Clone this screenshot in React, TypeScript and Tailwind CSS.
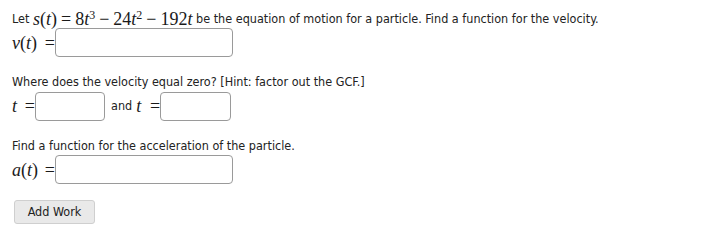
import React from "react";

const mathCls = "font-['Liberation_Serif',serif] text-[18px] leading-none text-[#1a1a1a]";
const sansCls = "font-['DejaVu_Sans_Condensed','DejaVu_Sans',sans-serif]";

function Box({ w }: { w: string }) {
  return <div className={`${w} h-[29px] border border-[#9a9a9a] rounded-[4px] bg-white shrink-0`} />;
}

export default function App() {
  return (
    <div className={`w-[708px] h-[236px] bg-white pl-[12px] pt-[9px] ${sansCls} text-[12.5px] text-[#222]`}>
      <div className="h-[20px] flex items-center whitespace-nowrap">
        <span>Let&nbsp;</span>
        <span className={mathCls}>
          <i>s</i>(<i>t</i>)<span className="mx-[4px]">=</span>8<i>t</i><sup className="text-[12px]">3</sup><span className="mx-[4px]">−</span>24<i>t</i><sup className="text-[12px]">2</sup><span className="mx-[4px]">−</span>192<i>t</i>
        </span>
        <span>&nbsp;be the equation of motion for a particle. Find a function for the velocity.</span>
      </div>
      <div className="flex items-center mt-[-1px] h-[29px]">
        <span className={`${mathCls} w-[43px] flex`}>
          <span><i>v</i>(<i>t</i>)</span><span className="ml-auto">=</span>
        </span>
        <Box w="w-[178px]" />
      </div>
      <div className="mt-[16px] h-[18px] flex items-center">Where does the velocity equal zero? [Hint: factor out the GCF.]</div>
      <div className="flex items-center h-[30px]">
        <span className={`${mathCls} w-[23px] flex`}>
          <i>t</i><span className="ml-auto">=</span>
        </span>
        <Box w="w-[70px]" />
        <span className="ml-[6px] mr-[4px]">and</span>
        <span className={`${mathCls} w-[24px] flex`}>
          <i>t</i><span className="ml-auto">=</span>
        </span>
        <Box w="w-[71px]" />
      </div>
      <div className="mt-[16px] h-[18px] flex items-center">Find a function for the acceleration of the particle.</div>
      <div className="flex items-center h-[29px]">
        <span className={`${mathCls} w-[43px] flex`}>
          <span><i>a</i>(<i>t</i>)</span><span className="ml-auto">=</span>
        </span>
        <Box w="w-[178px]" />
      </div>
      <button className={`mt-[16px] ml-[2px] w-[81px] h-[24px] bg-[#e9e9e9] border border-[#cfcfcf] rounded-[3px] text-[12.5px] text-[#222] ${sansCls}`}>
        Add Work
      </button>
    </div>
  );
}
